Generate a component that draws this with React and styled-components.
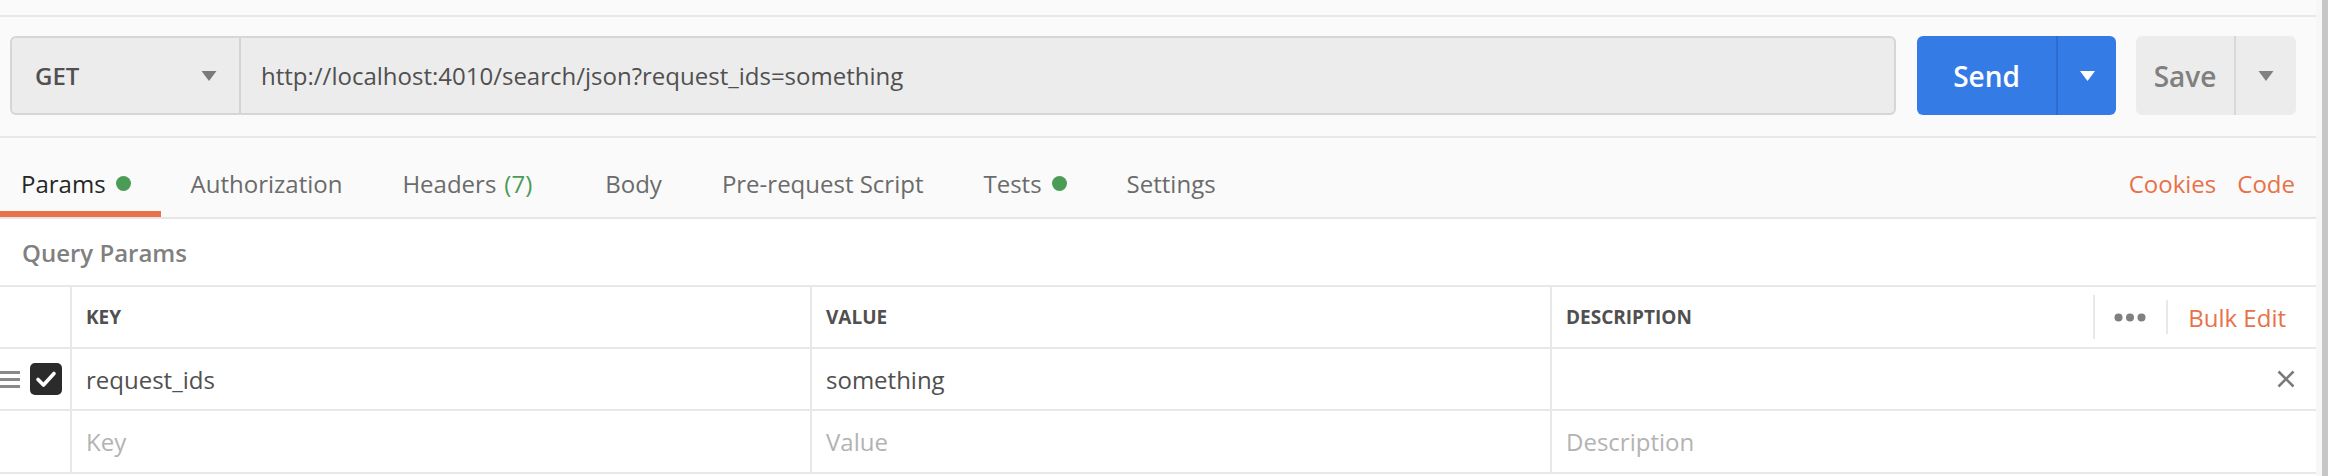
import React from 'react';
import styled, { createGlobalStyle } from 'styled-components';

const GlobalStyle = createGlobalStyle`
  html, body {
    margin: 0;
    padding: 0;
    background: #fafafa;
  }
  body {
    font-family: 'Open Sans', 'Noto Sans', sans-serif;
    -webkit-font-smoothing: antialiased;
  }
`;

const Page = styled.div`
  display: flex;
  width: 2328px;
  height: 476px;
  overflow: hidden;
  background: #fafafa;
`;

const Main = styled.div`
  width: 2316px;
  display: flex;
  flex-direction: column;
`;

const ScrollTrack = styled.div`
  width: 12px;
  display: flex;
  justify-content: flex-end;
  background: #f7f7f7;
`;

const ScrollThumb = styled.div`
  width: 6px;
  background: #c6c6c6;
`;

const TopStrip = styled.div`
  height: 15px;
  border-bottom: 2px solid #e8e8e8;
`;

const RequestBar = styled.div`
  display: flex;
  align-items: stretch;
  height: 79px;
  padding: 19px 20px 21px 10px;
  border-bottom: 2px solid #e8e8e8;
`;

const MethodSelect = styled.div`
  width: 231px;
  box-sizing: border-box;
  display: flex;
  align-items: center;
  justify-content: space-between;
  padding: 0 22px 0 23px;
  background: #ececec;
  border: 2px solid #d6d6d6;
  border-right: 2px solid #d4d4d4;
  border-radius: 6px 0 0 6px;
  font-size: 24px;
  font-weight: 600;
  color: #505050;
`;

const UrlInput = styled.div`
  flex: 1;
  display: flex;
  align-items: center;
  padding-left: 20px;
  background: #ececec;
  border: 2px solid #d6d6d6;
  border-left: none;
  border-radius: 0 6px 6px 0;
  font-size: 24px;
  color: #505050;
  white-space: nowrap;
`;

const SplitButton = styled.div`
  display: flex;
  margin-left: ${p => p.$gap}px;
  border-radius: 6px;
  overflow: hidden;
  background: ${p => (p.$primary ? '#347be6' : '#ececec')};
  color: ${p => (p.$primary ? '#ffffff' : '#808080')};
  font-size: 28px;
  font-weight: 600;
`;

const ButtonLabel = styled.div`
  width: ${p => p.$width}px;
  display: flex;
  align-items: center;
  justify-content: center;
`;

const ButtonCaret = styled.div`
  width: ${p => p.$width}px;
  display: flex;
  align-items: center;
  justify-content: center;
  border-left: 2px solid ${p => (p.$primary ? '#2d6ccf' : '#d8d8d8')};
`;

const Caret = ({ color, w = 15, h = 10 }) => (
  <svg width={w} height={h} viewBox="0 0 15 10">
    <polygon points="0,0 15,0 7.5,10" fill={color} />
  </svg>
);

const TabBar = styled.div`
  display: flex;
  align-items: stretch;
  height: 79px;
  border-bottom: 2px solid #e6e6e6;
`;

const Tab = styled.div`
  display: flex;
  align-items: center;
  gap: 10px;
  padding: 12px ${p => p.$padRight}px 0 ${p => (p.$first ? 21 : 30)}px;
  font-size: 24px;
  color: ${p => (p.$active ? '#262626' : '#6b6b6b')};
  box-shadow: ${p => (p.$active ? 'inset 0 -6px 0 #e8734a' : 'none')};
  white-space: nowrap;
`;

const Dot = styled.span`
  width: 15px;
  height: 15px;
  border-radius: 50%;
  background: #4b9c56;
`;

const Count = styled.span`
  color: #4b9c56;
  margin-left: 8px;
`;

const TabLinks = styled.div`
  margin-left: auto;
  display: flex;
  align-items: center;
  gap: 21px;
  padding: 12px 21px 0 0;
`;

const Link = styled.span`
  font-size: 24px;
  color: #e8714a;
`;

const Panel = styled.div`
  flex: 1;
  background: #ffffff;
  display: flex;
  flex-direction: column;
`;

const SectionTitle = styled.div`
  height: 66px;
  display: flex;
  align-items: center;
  padding-left: 22px;
  font-size: 24px;
  font-weight: 600;
  color: #808080;
`;

const Table = styled.div`
  border-top: 2px solid #e8e8e8;
`;

const Row = styled.div`
  display: grid;
  grid-template-columns: 70px 740px 740px 1fr;
  height: ${p => p.$h}px;
  border-bottom: 2px solid #e8e8e8;
`;

const Cell = styled.div`
  display: flex;
  align-items: center;
  padding-left: ${p => (p.$handle ? 0 : 14)}px;
  border-left: ${p => (p.$handle ? 'none' : '2px solid #e8e8e8')};
  font-size: ${p => (p.$head ? 19 : 24)}px;
  font-weight: ${p => (p.$head ? 700 : 400)};
  color: ${p => (p.$muted ? '#b3b3b3' : '#505050')};
  gap: ${p => (p.$handle ? 10 : 0)}px;
  min-width: 0;
  white-space: nowrap;
`;

const HeadTools = styled.div`
  margin-left: auto;
  display: flex;
  align-items: center;
  height: 100%;
  padding-right: 30px;
`;

const ToolDivider = styled.div`
  width: 2px;
  height: ${p => p.$h}px;
  background: #e8e8e8;
`;

const MoreDots = styled.div`
  padding: 0 20px 0 19px;
  display: flex;
  align-items: center;
`;

const BulkEdit = styled.span`
  margin-left: 20px;
  font-size: 24px;
  font-weight: 400;
  color: #e8714a;
`;

const Check = styled.div`
  width: 32px;
  height: 32px;
  border-radius: 5px;
  background: #2b2b2b;
  display: flex;
  align-items: center;
  justify-content: center;
`;

const RemoveButton = styled.div`
  margin-left: auto;
  padding-right: 21px;
  display: flex;
  align-items: center;
`;

const Handle = () => (
  <svg width="20" height="20" viewBox="0 0 20 20">
    <rect x="0" y="2" width="20" height="3" fill="#8a8a8a" />
    <rect x="0" y="9" width="20" height="3" fill="#8a8a8a" />
    <rect x="0" y="16" width="20" height="3" fill="#8a8a8a" />
  </svg>
);

const tabs = [
  { label: 'Params', dot: true, active: true },
  { label: 'Authorization' },
  { label: 'Headers', count: '(7)', extra: 13 },
  { label: 'Body' },
  { label: 'Pre-request Script' },
  { label: 'Tests', dot: true },
  { label: 'Settings' }
];

export default function App() {
  return (
    <Page>
      <GlobalStyle />
      <Main>
        <TopStrip />
        <RequestBar>
          <MethodSelect>
            GET
            <Caret color="#7a7a7a" w={16} />
          </MethodSelect>
          <UrlInput>http://localhost:4010/search/json?request_ids=something</UrlInput>
          <SplitButton $primary $gap={21}>
            <ButtonLabel $width={139}>Send</ButtonLabel>
            <ButtonCaret $primary $width={58}>
              <Caret color="#ffffff" />
            </ButtonCaret>
          </SplitButton>
          <SplitButton $gap={20}>
            <ButtonLabel $width={98}>Save</ButtonLabel>
            <ButtonCaret $width={60}>
              <Caret color="#808080" w={16} />
            </ButtonCaret>
          </SplitButton>
        </RequestBar>
        <TabBar>
          {tabs.map((t, i) => (
            <Tab key={t.label} $first={i === 0} $active={t.active} $padRight={30 + (t.extra || 0)}>
              <span>
                {t.label}
                {t.count && <Count>{t.count}</Count>}
              </span>
              {t.dot && <Dot />}
            </Tab>
          ))}
          <TabLinks>
            <Link>Cookies</Link>
            <Link>Code</Link>
          </TabLinks>
        </TabBar>
        <Panel>
          <SectionTitle>Query Params</SectionTitle>
          <Table>
            <Row $h={60}>
              <Cell $handle />
              <Cell $head>KEY</Cell>
              <Cell $head>VALUE</Cell>
              <Cell $head>
                DESCRIPTION
                <HeadTools>
                  <ToolDivider $h={44} />
                  <MoreDots>
                    <svg width="32" height="9" viewBox="0 0 32 9">
                      <circle cx="4.5" cy="4.5" r="4" fill="#808080" />
                      <circle cx="16" cy="4.5" r="4" fill="#808080" />
                      <circle cx="27.5" cy="4.5" r="4" fill="#808080" />
                    </svg>
                  </MoreDots>
                  <ToolDivider $h={34} />
                  <BulkEdit>Bulk Edit</BulkEdit>
                </HeadTools>
              </Cell>
            </Row>
            <Row $h={60}>
              <Cell $handle>
                <Handle />
                <Check>
                  <svg width="22" height="18" viewBox="0 0 22 18">
                    <polyline
                      points="3,9.5 8.5,15 19,3.5"
                      fill="none"
                      stroke="#ffffff"
                      strokeWidth="3.6"
                      strokeLinecap="round"
                      strokeLinejoin="round"
                    />
                  </svg>
                </Check>
              </Cell>
              <Cell>request_ids</Cell>
              <Cell>something</Cell>
              <Cell>
                <RemoveButton>
                  <svg width="18" height="18" viewBox="0 0 18 18">
                    <path d="M1.5 1.5 L16.5 16.5 M16.5 1.5 L1.5 16.5" stroke="#7a7a7a" strokeWidth="2.6" />
                  </svg>
                </RemoveButton>
              </Cell>
            </Row>
            <Row $h={61}>
              <Cell $handle />
              <Cell $muted>Key</Cell>
              <Cell $muted>Value</Cell>
              <Cell $muted>Description</Cell>
            </Row>
          </Table>
        </Panel>
      </Main>
      <ScrollTrack>
        <ScrollThumb />
      </ScrollTrack>
    </Page>
  );
}
